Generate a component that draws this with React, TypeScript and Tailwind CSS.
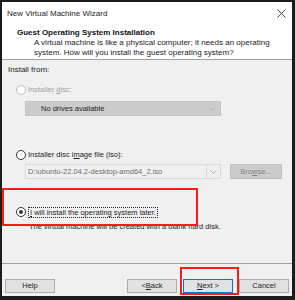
import React from 'react';

const Radio = ({ checked = false, disabled = false }: { checked?: boolean; disabled?: boolean }) => (
  <span
    className={`flex h-[10px] w-[10px] shrink-0 items-center justify-center rounded-full border bg-white ${
      disabled ? 'border-[#bcbcbc]' : 'border-[#333333]'
    }`}
  >
    {checked && <span className="h-[4px] w-[4px] rounded-full bg-[#333333]" />}
  </span>
);

const Chevron = ({ color }: { color: string }) => (
  <svg width="7" height="4" viewBox="0 0 7 4" fill="none">
    <path d="M0.5 0.5 L3.5 3.5 L6.5 0.5" stroke={color} strokeWidth="0.8" />
  </svg>
);

const Button = ({ label, primary = false }: { label: React.ReactNode; primary?: boolean }) => (
  <div
    className={`flex h-[14px] w-[50px] items-center justify-center border bg-[#e1e1e1] text-[7.5px] leading-none text-[#222] ${
      primary ? 'border-[#0078d7]' : 'border-[#adadad]'
    }`}
  >
    {label}
  </div>
);

export default function App() {
  return (
    <div
      className="relative flex h-[300px] w-[295px] flex-col bg-[#1c1c1c] pb-[4px] pl-[2px] pr-[3px] pt-[2px] text-[#1a1a1a]"
      style={{ fontFamily: '"Liberation Sans", Arial, sans-serif' }}
    >
      {/* title bar */}
      <div className="flex h-[23px] items-center justify-between bg-white pl-[5px] pr-[6px]">
        <span className="text-[8px] leading-none text-[#222]">New Virtual Machine Wizard</span>
        <svg width="9" height="9" viewBox="0 0 9 9" fill="none">
          <path d="M0.5 0.5 L8.5 8.5 M8.5 0.5 L0.5 8.5" stroke="#333" strokeWidth="0.9" />
        </svg>
      </div>

      {/* header */}
      <div className="flex h-[35px] flex-col border-b border-[#a0a0a0] bg-white pl-[15px] pt-[3px]">
        <span className="text-[8px] font-bold leading-[10px] text-[#111]">Guest Operating System Installation</span>
        <span className="pl-[17px] text-[8px] leading-[10px] text-[#222]">
          A virtual machine is like a physical computer; it needs an operating
        </span>
        <span className="pl-[17px] text-[8px] leading-[10px] text-[#222]">
          system. How will you install the guest operating system?
        </span>
      </div>

      {/* body */}
      <div className="flex flex-1 flex-col bg-[#f0f0f0]">
        <div className="flex flex-1 flex-col pl-[6px]">
          <span className="mt-[5px] text-[8px] leading-[10px] text-[#222]">Install from:</span>

          <div className="ml-[8px] mt-[9px] flex h-[12px] items-center gap-[2px]">
            <Radio disabled />
            <span className="text-[7.5px] leading-none text-[#a0a0a0]">
              Installer <span className="underline">d</span>isc:
            </span>
          </div>

          <div className="ml-[17px] mt-[5px] flex h-[15px] w-[196px] items-center justify-between border border-[#c4c4c4] bg-[#cccccc] pl-[15px] pr-[4px]">
            <span className="text-[7.5px] leading-none text-[#222]">No drives available</span>
            <Chevron color="#a8a8a8" />
          </div>

          <div className="ml-[8px] mt-[33px] flex h-[12px] items-center gap-[2px]">
            <Radio />
            <span className="text-[7.5px] leading-none text-[#222]">
              Installer disc i<span className="underline">m</span>age file (iso):
            </span>
          </div>

          <div className="mt-[3px] flex items-center">
            <div className="ml-[17px] flex h-[15px] w-[196px] items-center justify-between border border-[#d9d9d9] bg-[#f0f0f0] pl-[2px] pr-[3px]">
              <span className="text-[7.5px] leading-none text-[#6d6d6d]">D:\ubuntu-22.04.2-desktop-amd64_2.iso</span>
              <div className="flex h-full items-center border-l border-[#d9d9d9] pl-[3px]">
                <Chevron color="#9a9a9a" />
              </div>
            </div>
            <div className="ml-[9px] flex h-[15px] w-[52px] items-center justify-center border border-[#bfbfbf] bg-[#cccccc] text-[7.5px] leading-none text-[#838383]">
              Bro<span className="underline">w</span>se...
            </div>
          </div>

          <div className="ml-[8px] mt-[27px] flex h-[12px] items-center gap-[2px]">
            <Radio checked />
            <span className="border border-dotted border-[#222] px-[1px] text-[7.5px] leading-[9px] text-[#222]">
              <span className="underline">I</span> will install the operating system later.
            </span>
          </div>

          <span className="ml-[21px] mt-[4px] text-[7.5px] leading-[10px] text-[#222]">
            The virtual machine will be created with a blank hard disk.
          </span>
        </div>

        {/* footer */}
        <div className="flex h-[33px] items-start justify-between border-t border-[#a0a0a0] px-[3px] pt-[15px]">
          <Button label="Help" />
          <div className="flex gap-[6px]">
            <Button label={<>&lt; <span className="underline">B</span>ack</>} />
            <Button primary label={<><span className="underline">N</span>ext &gt;</>} />
            <Button label="Cancel" />
          </div>
        </div>
      </div>

      {/* annotation boxes */}
      <div className="pointer-events-none absolute left-[2px] top-[188px] h-[38px] w-[196px] border-2 border-[#ff1a1a]" />
      <div className="pointer-events-none absolute left-[180px] top-[267px] h-[28px] w-[59px] border-2 border-[#ff1a1a]" />
    </div>
  );
}
